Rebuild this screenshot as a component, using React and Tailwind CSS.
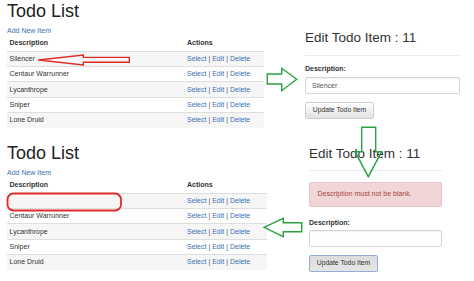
import React from "react";

const top = ["Silencer", "Centaur Warrunner", "Lycanthrope", "Sniper", "Lone Druid"];
const bottom = ["", "Centaur Warrunner", "Lycanthrope", "Sniper", "Lone Druid"];

function TodoList({ items, tableW, padTop, headMt }) {
  return (
    <div className={`flex flex-col pl-[7px] ${padTop}`}>
      <h1 className="text-[18px] leading-[18px] text-[#222]">Todo List</h1>
      <a className={`${headMt} h-[10px] leading-[10px] text-[#3d70b2]`}>Add New Item</a>
      <div className={`flex flex-col ${tableW}`}>
        <div className="flex h-[15px] items-center font-bold">
          <div className="w-[180px] pl-[2.5px]">Description</div>
          <div>Actions</div>
        </div>
        {items.map((it, i) => (
          <div
            key={i}
            className={`flex h-[15.4px] items-center border-t border-[#dedede] ${i % 2 === 0 ? "bg-[#f6f6f6]" : "bg-white"}`}
          >
            <div className="w-[180px] pl-[2.5px]">{it}</div>
            <div className="text-[#3d70b2]">
              Select <span className="text-[#555]">|</span> Edit <span className="text-[#555]">|</span> Delete
            </div>
          </div>
        ))}
      </div>
    </div>
  );
}

export default function App() {
  return (
    <div
      className="relative h-[281px] w-[474px] overflow-hidden bg-white text-[7px] leading-[10px] text-[#333]"
      style={{ fontFamily: '"Liberation Sans", Arial, sans-serif' }}
    >
      {/* top half */}
      <div className="flex h-[140px]">
        <div className="w-[305px]">
          <TodoList items={top} tableW="w-[257px]" padTop="pt-[2px]" headMt="mt-[5.6px]" />
        </div>
        <div className="flex w-[155px] flex-col">
          <h3 className="mt-[30.5px] h-[14px] text-[13.5px] leading-[14px] text-[#333]">Edit Todo Item : 11</h3>
          <div className="mt-[10px] border-t border-[#ececec]" />
          <label className="mt-[8.2px] h-[10px] font-bold">Description:</label>
          <div className="mt-[3.6px] flex h-[16.7px] items-center rounded-[2px] border border-[#d4d4d4] pl-[6px] text-[#555] shadow-[inset_0_1px_1px_rgba(0,0,0,0.06)]">
            Silencer
          </div>
          <div className="mt-[8px] flex h-[17px] w-[69px] items-center justify-center rounded-[2px] border border-[#cfcfcf] bg-gradient-to-b from-white to-[#e2e2e2] text-[6.8px] text-[#333]">
            Update Todo Item
          </div>
        </div>
      </div>

      {/* bottom half */}
      <div className="flex">
        <div className="w-[309px]">
          <TodoList items={bottom} tableW="w-[260px]" padTop="pt-[4px]" headMt="mt-[5.7px]" />
        </div>
        <div className="flex w-[133px] flex-col">
          <h3 className="mt-[6.5px] h-[14px] text-[13.5px] leading-[14px] text-[#333]">Edit Todo Item : 11</h3>
          <div className="mt-[9.5px] border-t border-[#ececec]" />
          <div className="mt-[10.7px] flex h-[25px] items-center rounded-[2px] border border-[#e8c6cb] bg-[#f0d6d6] pl-[7.5px] text-[#a94442]">
            Description must not be blank.
          </div>
          <label className="mt-[11px] h-[10px] font-bold">Description:</label>
          <div className="mt-[2.3px] h-[17.3px] rounded-[2px] border border-[#d4d4d4] shadow-[inset_0_1px_1px_rgba(0,0,0,0.06)]" />
          <div className="mt-[7.7px] flex h-[16.7px] w-[69px] items-center justify-center rounded-[2px] border border-[#95acd6] bg-gradient-to-b from-[#dcdcdc] to-[#e6e6e6] text-[6.8px] text-[#333]">
            Update Todo Item
          </div>
        </div>
      </div>

      {/* annotations */}
      <svg className="pointer-events-none absolute left-0 top-0" width="474" height="281" viewBox="0 0 474 281">
        <polygon
          points="38.3,60 83.3,55 83.3,57.4 129.3,57.4 129.3,62.2 83.3,62.2 83.3,65"
          fill="none"
          stroke="#e02a2a"
          strokeWidth="1.4"
        />
        <rect x="7.5" y="193.5" width="113.5" height="17" rx="6" fill="none" stroke="#e02a2a" strokeWidth="1.8" />
        <polygon
          points="267.3,74 281.7,74 281.7,68.3 296.7,79.3 281.7,90.7 281.7,84 267.3,84"
          fill="none"
          stroke="#27a23d"
          strokeWidth="1.4"
        />
        <polygon
          points="361.7,127.3 375.7,127.3 375.7,151.7 381.7,151.7 368.3,176.7 355,151.7 361.7,151.7"
          fill="none"
          stroke="#27a23d"
          strokeWidth="1.4"
        />
        <polygon
          points="264,227.3 283.3,218.3 283.3,222.7 301.7,222.7 301.7,231.7 283.3,231.7 283.3,236.7"
          fill="none"
          stroke="#27a23d"
          strokeWidth="1.4"
        />
      </svg>
    </div>
  );
}
